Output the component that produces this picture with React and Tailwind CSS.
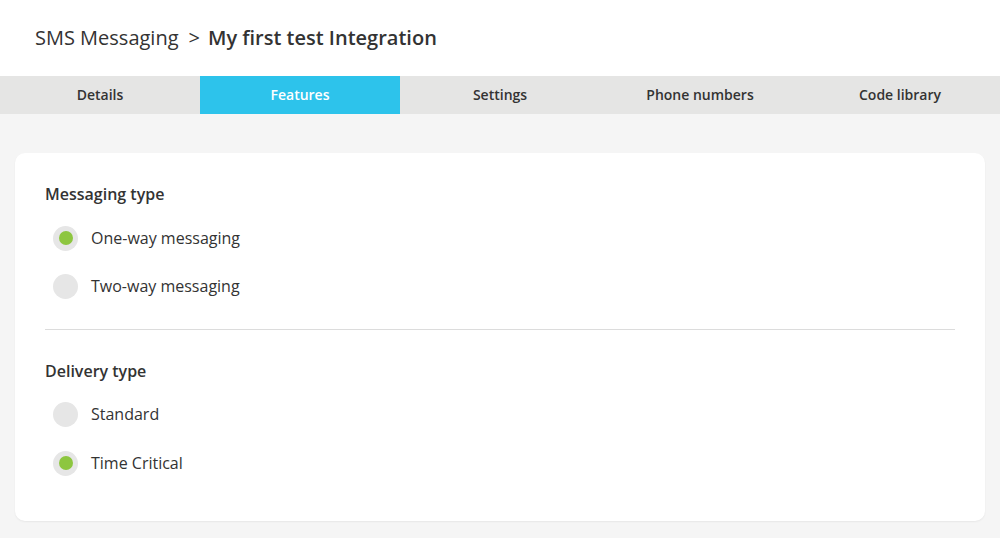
const tabs = ["Details", "Features", "Settings", "Phone numbers", "Code library"];

function Radio({ label, checked }) {
  return (
    <div className="flex h-12 items-center">
      <span className="ml-2 grid h-[25px] w-[25px] place-items-center rounded-full bg-[#e6e6e6]">
        {checked && <span className="h-[14px] w-[14px] rounded-full bg-[#8dc63f]" />}
      </span>
      <span className="ml-[13px] text-base text-[#333]">{label}</span>
    </div>
  );
}

export default function App() {
  return (
    <div className="h-[538px] bg-[#f5f5f5] font-['Open_Sans',sans-serif] text-[#333]">
      <div className="flex h-[76px] items-center bg-white pl-[35px] text-[20px]">
        <span>SMS Messaging</span>
        <span className="ml-[10px] mr-[8px]">&gt;</span>
        <span className="font-semibold">My first test Integration</span>
      </div>
      <div className="flex h-[38px] bg-[#e5e5e4]">
        {tabs.map((t) => (
          <div
            key={t}
            className={`flex flex-1 items-center justify-center text-sm font-semibold ${
              t === "Features" ? "bg-[#2dc3eb] text-white" : "text-[#333]"
            }`}
          >
            {t}
          </div>
        ))}
      </div>
      <div className="px-[15px] pt-[39px]">
        <div className="h-[368px] rounded-[10px] bg-white px-[30px] pt-[29px] shadow-[0_1px_2px_rgba(0,0,0,0.06)]">
          <h2 className="text-base font-semibold leading-6">Messaging type</h2>
          <div className="mt-2">
            <Radio label="One-way messaging" checked />
            <Radio label="Two-way messaging" />
          </div>
          <div className="mt-[19px] border-t border-[#dcdcdc]" />
          <h2 className="mt-[29px] text-base font-semibold leading-6">Delivery type</h2>
          <div className="mt-[7px]">
            <Radio label="Standard" />
            <div className="mt-px">
              <Radio label="Time Critical" checked />
            </div>
          </div>
        </div>
      </div>
    </div>
  );
}
